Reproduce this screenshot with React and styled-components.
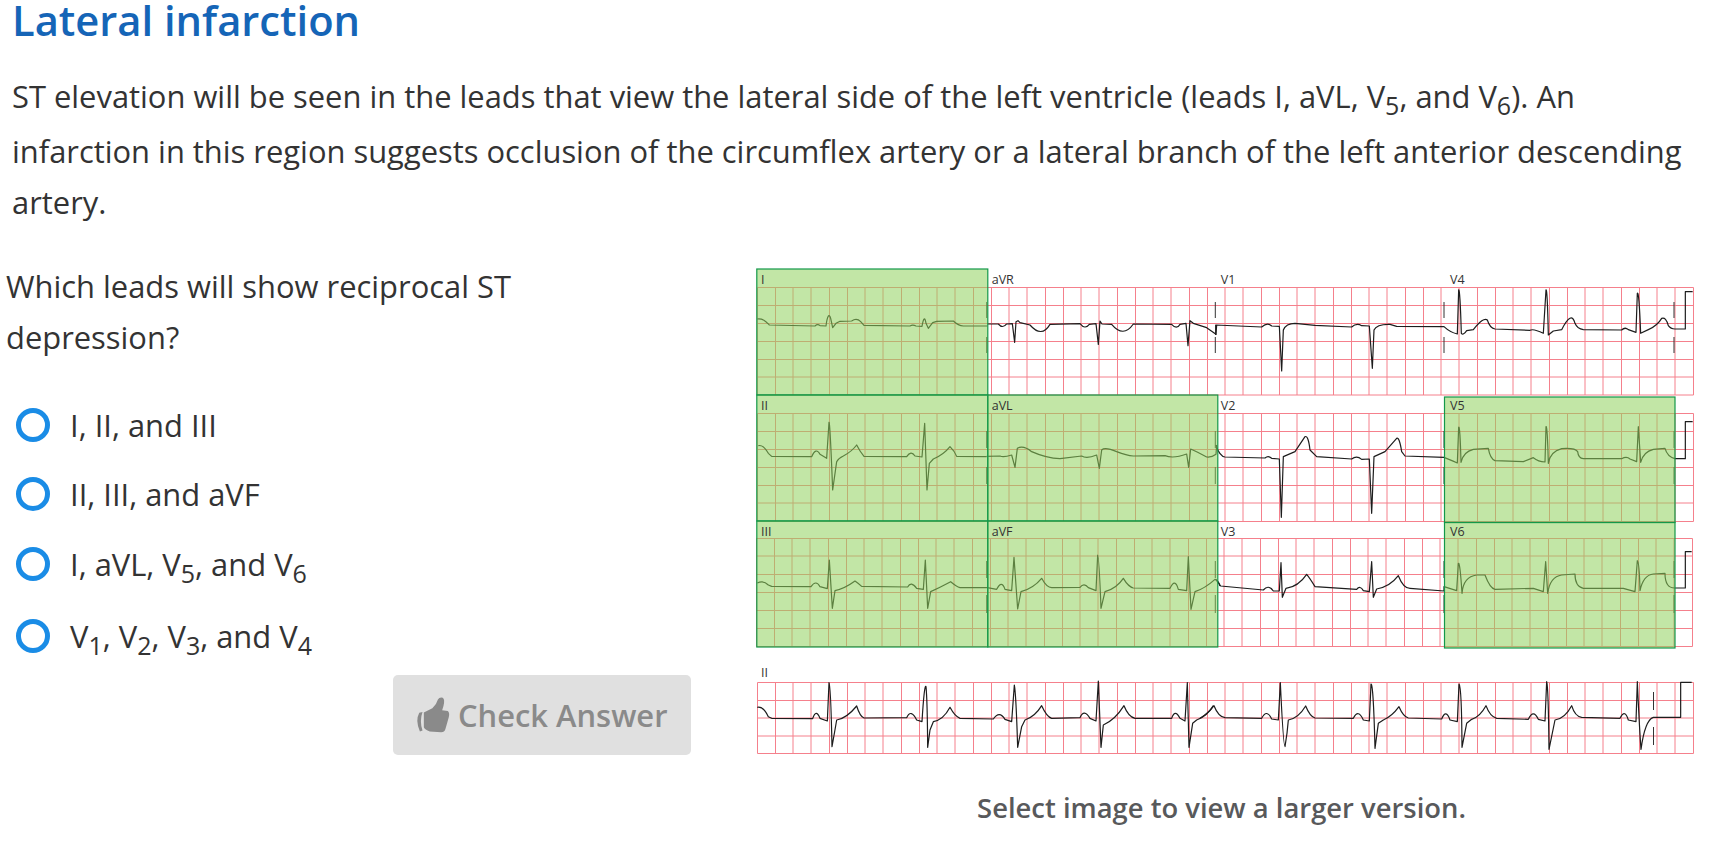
import React from "react";
import styled, { createGlobalStyle } from "styled-components";

const GlobalStyle = createGlobalStyle`
  html, body {
    margin: 0;
    padding: 0;
    background: #fff;
    overflow: hidden;
  }
  body {
    font-family: "Open Sans", "Liberation Sans", sans-serif;
    color: #333;
  }
`;

// traces are written in 3x crop units, each panel has its own origin
const panels = {
  a: "translate(740 255) scale(0.33333)",
  b: "translate(1200 255) scale(0.33333)",
  c: "translate(740 520) scale(0.33333)",
  d: "translate(1200 520) scale(0.33333)",
};

const traces = [
  // lead I
  ["a", "M52 192 C70 190 78 200 88 210 L225 213 Q233 206 240 212 L258 213 C262 180 268 175 272 190 L278 218 L288 205 L300 199 L335 198 Q350 188 362 200 L372 211 L510 213 Q518 208 528 213 L546 214 Q553 175 558 205 L565 220 L578 203 L590 199 L640 198 Q655 212 670 213 L742 213"],
  // aVR
  ["a", "M742 207 L775 207 Q788 222 800 207 L817 206 L824 262 L828 200 L834 197 L840 203 L870 210 Q905 250 930 208 L1020 206 Q1035 225 1048 208 L1068 206 L1075 268 L1080 198 L1086 207 L1115 208 Q1150 250 1180 207 L1295 208 Q1310 225 1320 208 L1338 205 L1344 272 L1350 197 L1360 205 L1400 218 L1428 238 L1430 210"],
  // V1 + V4
  ["b", "M47 240 L47 210 L185 216 Q203 200 215 213 L238 214 L245 348 L250 225 Q258 205 285 205 L345 211 L455 216 Q470 203 485 212 L508 213 L517 340 L522 225 Q530 207 570 208 L590 214 L732 215 Q750 232 772 237 L776 105 Q780 100 784 235 Q790 242 800 227 L820 224 Q850 185 862 195 Q870 220 885 222 L990 226 Q1000 220 1030 235 L1038 105 Q1042 100 1045 240 L1060 228 L1085 224 Q1115 165 1125 205 Q1132 222 1150 224 L1265 225 Q1275 215 1285 224 L1308 232 L1312 115 Q1317 105 1322 235 L1345 224 Q1372 212 1385 190 Q1398 185 1405 212 Q1412 222 1425 222 L1456 222 L1456 110 L1478 110"],
  // lead II
  ["a", "M55 572 Q70 568 85 595 L95 604 L215 605 Q228 575 240 598 L260 610 L267 502 Q270 500 278 705 L290 620 Q295 610 310 603 Q335 590 350 570 Q360 590 372 604 L500 605 Q513 585 525 603 L546 606 L554 505 L561 705 L568 625 L580 612 Q610 600 630 575 Q645 590 650 604 L740 605"],
  // aVL
  ["a", "M740 604 L780 603 Q790 608 815 600 L825 637 L832 580 Q850 570 875 590 Q920 610 960 611 L1025 603 Q1040 612 1070 600 L1078 640 L1085 585 Q1095 575 1130 590 Q1160 602 1180 603 L1275 602 Q1300 612 1340 597 L1346 637 L1352 582 Q1370 590 1400 606 Q1415 608 1428 598 L1430 570"],
  // V2 + V5
  ["b", "M47 570 Q60 605 75 606 L195 609 Q205 600 215 610 L238 612 L244 787 L250 605 L285 590 L315 545 Q325 540 330 585 L350 605 L455 612 Q470 600 485 613 L508 612 L515 775 L522 605 L555 590 L590 550 Q598 545 605 590 L615 603 L732 607 Q745 612 772 624 L776 517 Q780 510 783 622 Q790 590 820 583 L865 580 Q870 610 885 617 L970 620 L1000 608 Q1015 620 1035 621 L1038 515 Q1042 510 1045 625 Q1050 590 1085 581 Q1125 578 1133 590 Q1135 610 1150 611 L1265 611 Q1280 603 1290 612 L1310 620 L1315 515 L1322 622 Q1330 590 1360 583 L1395 580 Q1402 605 1425 611 L1456 611 L1456 500 L1478 500"],
  // III + aVF
  ["c", "M52 189 Q70 180 85 195 L95 199 L213 200 Q228 178 240 200 L262 206 L268 120 L277 265 L285 212 Q315 205 345 183 Q355 190 365 199 L503 201 Q513 182 530 205 L550 208 L556 120 L563 265 L572 215 Q600 202 632 185 Q650 200 660 203 L742 203 L770 208 Q785 178 795 208 L815 212 L822 112 L833 267 L843 215 Q880 205 905 175 Q920 203 935 203 L1020 202 Q1032 187 1045 203 L1068 212 L1073 105 Q1077 105 1083 265 L1095 215 Q1130 205 1150 175 Q1165 200 1180 204 L1290 205 Q1305 172 1315 208 L1340 212 L1345 110 L1353 268 L1365 215 Q1395 205 1425 178 Q1435 180 1440 198"],
  // V3 + V6
  ["d", "M47 178 L62 198 L190 210 Q205 192 220 213 L238 213 L243 128 L247 232 L258 205 Q295 200 320 163 Q330 175 345 200 L470 208 Q480 195 490 212 L508 215 L515 125 L520 232 L530 207 Q570 200 595 167 Q610 205 630 205 L732 213 L732 200 L770 212 L775 130 Q780 125 786 220 Q790 170 830 165 L855 165 Q870 205 885 208 L1000 205 L1030 215 L1037 125 L1043 220 Q1050 170 1085 165 L1125 162 Q1125 200 1150 205 L1270 205 L1305 215 L1312 122 Q1318 125 1320 212 Q1330 165 1360 162 L1395 160 Q1395 205 1425 204 L1456 204 L1456 95 L1475 95"],
  // rhythm strip
  ["c", "M52 562 Q70 558 85 590 L95 595 L218 596 Q228 565 240 595 L262 603 L267 488 Q272 490 276 680 Q285 630 290 600 Q320 595 350 558 Q360 590 372 594 L500 593 Q513 565 530 600 L546 605 Q553 490 558 500 Q562 540 563 682 L570 630 L580 605 Q610 600 630 562 Q645 590 660 595 L760 597 Q778 570 795 598 L815 605 L823 495 Q828 520 833 682 L845 620 L855 600 Q885 590 905 557 Q920 590 935 595 L1020 593 Q1032 565 1050 595 L1068 603 L1075 483 L1083 682 L1090 615 Q1125 600 1152 557 Q1165 590 1185 595 L1295 595 Q1305 565 1320 595 L1335 603 L1342 488 L1347 682 L1358 610 L1370 600 Q1400 590 1420 557"],
  ["d", "M0 595 Q25 580 42 557 Q55 590 75 593 L185 595 Q200 565 215 597 L235 600 L241 488 Q250 680 255 680 Q262 640 265 600 Q295 595 317 558 Q330 590 345 594 L460 595 Q475 565 490 600 L508 603 L513 492 Q520 490 525 685 L535 610 L550 600 Q575 590 597 560 Q610 590 625 594 L725 597 Q738 565 750 600 L772 605 L777 492 Q785 500 786 682 L800 610 L815 598 Q840 590 858 557 Q870 590 890 595 L985 598 Q1000 565 1015 598 L1035 603 L1040 485 Q1045 500 1047 688 L1065 600 Q1095 595 1115 557 Q1125 590 1145 592 L1260 595 Q1275 565 1285 600 L1308 605 L1312 485 Q1318 620 1323 688 Q1335 600 1360 592 L1442 592 L1442 487 L1475 487"],
];

// lead separator ticks, in page units
const tickRows = [
  [302, 318, 337, 353],
  [431, 448, 467, 484],
  [561, 578, 595, 613],
];
const tickColumns = [986.7, 1215.3, 1444, 1674];

// whole-pixel rows come out pale and two pixels wide, like the scaled source image
const grids = [
  { x: 757, ys: [287.5, 305.5, 323.5, 341.5, 359.5, 377, 395] },
  { x: 757, ys: [413.5, 431.5, 449.5, 467.5, 485.5, 503, 521.5] },
  { x: 756, ys: [538.5, 556, 574.5, 592.5, 610.5, 628.5, 646.5] },
  { x: 757, ys: [682.5, 700.5, 718, 736, 753.5] },
];

const labels = [
  ["I", 761, 284], ["aVR", 991.7, 284], ["V1", 1220.7, 284], ["V4", 1450, 284],
  ["II", 761, 410], ["aVL", 991.7, 410], ["V2", 1220.7, 410], ["V5", 1450, 410],
  ["III", 761, 536], ["aVF", 991.7, 536], ["V3", 1220.7, 536], ["V6", 1450, 536],
  ["II", 761, 677],
];

const highlights = [
  [756.8, 269, 231, 126],
  [756.8, 395, 231, 126],
  [756.8, 521, 231, 126],
  [987.8, 395, 230, 126],
  [987.8, 521, 230, 126],
  [1444.5, 397, 230.5, 125.5],
  [1444.5, 522.5, 230.5, 125.5],
];

const EcgGrid = ({ x, ys }) => {
  const xs = Array.from({ length: 53 }, (_, i) => x + i * 18 + (i % 4 < 2 ? 0.5 : 0));
  return (
    <g stroke="#f5808c" strokeWidth="1" fill="none">
      {xs.map((vx) => (
        <line key={vx} x1={vx} x2={vx} y1={ys[0]} y2={ys[ys.length - 1]} />
      ))}
      {ys.map((y) => (
        <line key={y} x1={xs[0]} x2={xs[52]} y1={y} y2={y} />
      ))}
    </g>
  );
};

const EcgChart = () => (
  <ChartSvg viewBox="740 255 974 510" role="img" aria-label="12-lead ECG">
    {grids.map((g) => (
      <EcgGrid key={g.ys[0]} {...g} />
    ))}
    {traces.map(([panel, d], i) => (
      <path
        key={i}
        transform={panels[panel]}
        d={d}
        fill="none"
        stroke="#1d1d1d"
        strokeWidth="3.6"
        strokeLinejoin="round"
      />
    ))}
    <g stroke="#333" strokeWidth="1">
      {tickRows.map(([a, b, c, d]) =>
        tickColumns.map((x) => (
          <React.Fragment key={`${a}-${x}`}>
            <line x1={x} x2={x} y1={a} y2={b} />
            <line x1={x} x2={x} y1={c} y2={d} />
          </React.Fragment>
        ))
      )}
      <line x1="1653.5" x2="1653.5" y1="692" y2="710" />
      <line x1="1653.5" x2="1653.5" y1="727" y2="745" />
    </g>
    {highlights.map(([x, y, w, h]) => (
      <rect
        key={`${x}-${y}`}
        x={x}
        y={y}
        width={w}
        height={h}
        fill="rgba(144, 209, 93, 0.55)"
        stroke="#13984a"
        strokeWidth="1.2"
      />
    ))}
    {labels.map(([text, x, y]) => (
      <LeadLabel key={`${text}${y}`} x={x} y={y}>
        {text}
      </LeadLabel>
    ))}
  </ChartSvg>
);

const ThumbIcon = () => (
  <ButtonIcon viewBox="105 95 110 112" aria-hidden="true">
    <path d="M132 145 L158 132 Q170 122 175 105 Q180 97 190 100 Q197 105 192 125 L188 138 L205 140 Q212 145 208 160 L198 195 Q195 205 185 205 L150 203 Q135 198 132 190 Z" />
    <path d="M128 143 Q118 170 128 200 L120 203 Q105 170 118 146 Z" />
  </ButtonIcon>
);

const options = [
  <>I, II, and III</>,
  <>II, III, and aVF</>,
  <>I, aVL, V<sub>5</sub>, and V<sub>6</sub></>,
  <>V<sub>1</sub>, V<sub>2</sub>, V<sub>3</sub>, and V<sub>4</sub></>,
];

const App = () => {
  return (
    <Page>
      <GlobalStyle />
      <Title>Lateral infarction</Title>
      <Lead>
        ST elevation will be seen in the leads that view the lateral side of the left ventricle
        (leads I, aVL, V<sub>5</sub>, and V<sub>6</sub>). An infarction in this region suggests
        occlusion of the circumflex artery or a lateral branch of the left anterior descending
        artery.
      </Lead>
      <Columns>
        <Quiz>
          <Question>Which leads will show reciprocal ST depression?</Question>
          <OptionList>
            {options.map((option, i) => (
              <Option key={i}>
                <Radio />
                <span>{option}</span>
              </Option>
            ))}
          </OptionList>
          <CheckButton type="button" disabled>
            <ThumbIcon />
            Check Answer
          </CheckButton>
        </Quiz>
        <Figure>
          <EcgChart />
          <Caption>Select image to view a larger version.</Caption>
        </Figure>
      </Columns>
    </Page>
  );
};

export default App;

const Page = styled.main`
  width: 1714px;
  height: 860px;
  overflow: hidden;
  font-size: 30.9px;
  line-height: 51px;

  sub {
    font-size: 25px;
    line-height: 40.3px;
    vertical-align: -7px;
  }
`;

const Title = styled.h1`
  margin: -2px 0 0;
  padding-left: 12px;
  font-size: 41.7px;
  line-height: 44px;
  font-weight: 600;
  color: #1565b7;
`;

const Lead = styled.p`
  margin: 29px 0 0;
  padding: 0 12px;

  sub {
    line-height: 42px;
  }
`;

const Columns = styled.div`
  display: grid;
  grid-template-columns: 740px 974px;
  margin-top: 27px;
`;

const Quiz = styled.section`
  display: flex;
  flex-direction: column;
  padding-top: 6px;
`;

const Question = styled.p`
  margin: 0;
  padding-left: 6px;
  width: 530px;
`;

const OptionList = styled.div`
  display: flex;
  flex-direction: column;
  gap: 18.4px;
  margin-top: 37px;
  padding-left: 16px;
`;

const Option = styled.label`
  display: flex;
  align-items: flex-start;
  gap: 20px;
`;

const Radio = styled.span`
  box-sizing: border-box;
  width: 34px;
  height: 34px;
  margin-top: 8px;
  border: 5px solid #1a8ce6;
  border-radius: 50%;
`;

const CheckButton = styled.button`
  display: flex;
  align-items: center;
  gap: 7px;
  align-self: flex-end;
  box-sizing: border-box;
  width: 298px;
  height: 80px;
  margin: 9px 49px 0 0;
  padding: 0 0 0 22px;
  border: 0;
  border-radius: 5px;
  background: #e0e0e0;
  color: #8a8a8a;
  font-family: inherit;
  font-size: 30.9px;
  font-weight: 600;
`;

const ButtonIcon = styled.svg`
  width: 36px;
  height: 37px;
  fill: #8a8a8a;
  flex: none;
`;

const Figure = styled.figure`
  margin: 0;
  display: flex;
  flex-direction: column;
`;

const ChartSvg = styled.svg`
  display: block;
  width: 974px;
  height: 510px;
`;

const LeadLabel = styled.text`
  font-family: "Open Sans", sans-serif;
  font-size: 12.5px;
  fill: #333;
`;

const Caption = styled.figcaption`
  margin-top: 22.5px;
  padding-right: 11px;
  text-align: center;
  font-size: 27.4px;
  line-height: 40px;
  font-weight: 600;
  color: #58595b;
`;
